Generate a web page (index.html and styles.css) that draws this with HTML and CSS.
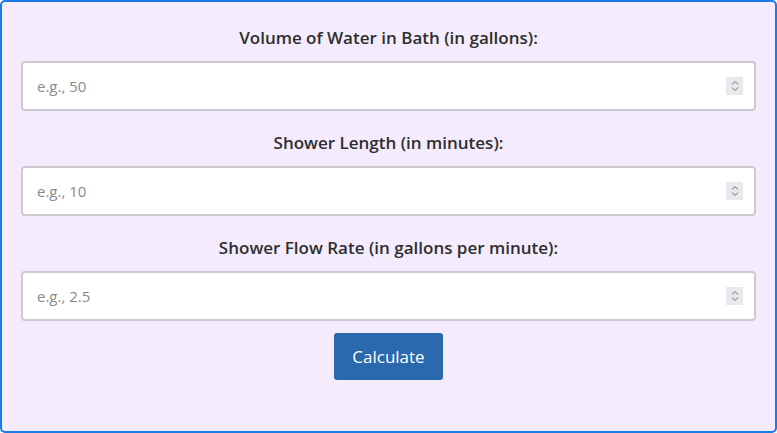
FILE: index.html
```html
<!DOCTYPE html>
<html lang="en">
<head>
    <meta charset="UTF-8">
    <meta name="viewport" content="width=device-width, initial-scale=1.0">
    <title>Bath vs Shower Calculator</title>
    <link rel="stylesheet" href="styles.css">
</head>
<body>
    <div class="calculator">
        <div class="form-group">
            <label for="bathVolume">Volume of Water in Bath (in gallons):</label>
            <div class="input-wrap">
                <input type="number" id="bathVolume" placeholder="e.g., 50">
                <span class="spinner">
                    <svg width="10" height="14" viewBox="0 0 10 14"><path d="M2 5.5 L5 2.5 L8 5.5 M2 8.5 L5 11.5 L8 8.5" fill="none" stroke="#6b6b73" stroke-width="1"/></svg>
                </span>
            </div>
        </div>
        <div class="form-group">
            <label for="showerLength">Shower Length (in minutes):</label>
            <div class="input-wrap">
                <input type="number" id="showerLength" placeholder="e.g., 10">
                <span class="spinner">
                    <svg width="10" height="14" viewBox="0 0 10 14"><path d="M2 5.5 L5 2.5 L8 5.5 M2 8.5 L5 11.5 L8 8.5" fill="none" stroke="#6b6b73" stroke-width="1"/></svg>
                </span>
            </div>
        </div>
        <div class="form-group">
            <label for="flowRate">Shower Flow Rate (in gallons per minute):</label>
            <div class="input-wrap">
                <input type="number" id="flowRate" placeholder="e.g., 2.5">
                <span class="spinner">
                    <svg width="10" height="14" viewBox="0 0 10 14"><path d="M2 5.5 L5 2.5 L8 5.5 M2 8.5 L5 11.5 L8 8.5" fill="none" stroke="#6b6b73" stroke-width="1"/></svg>
                </span>
            </div>
        </div>
        <div class="actions">
            <button type="button">Calculate</button>
        </div>
    </div>
</body>
</html>
```

FILE: styles.css
```css
* {
    box-sizing: border-box;
}

body {
    margin: 0;
    font-family: "Open Sans", "Noto Sans", sans-serif;
    color: #333;
}

.calculator {
    width: 777px;
    height: 433px;
    background: #f4ecfc;
    border: 2px solid #1a7ae8;
    border-radius: 5px;
    padding: 24px 19px 0;
}

.form-group {
    margin-bottom: 20px;
}

.form-group label {
    display: block;
    text-align: center;
    font-size: 17px;
    font-weight: 600;
    line-height: 24px;
    margin-bottom: 11px;
    color: #2e2e2e;
}

.input-wrap {
    position: relative;
}

.input-wrap input {
    display: block;
    width: 100%;
    height: 50px;
    padding: 0 14px;
    border: 2px solid #cdcad0;
    border-radius: 4px;
    background: #fff;
    font-family: inherit;
    font-size: 15px;
    color: #333;
    -moz-appearance: textfield;
}

.input-wrap input::placeholder {
    color: #8a8a8a;
}

.input-wrap input::-webkit-inner-spin-button,
.input-wrap input::-webkit-outer-spin-button {
    -webkit-appearance: none;
    margin: 0;
}

.spinner {
    position: absolute;
    right: 13px;
    top: 16px;
    width: 17px;
    height: 18px;
    background: #e9e9ed;
    display: flex;
    align-items: center;
    justify-content: center;
}

.actions {
    display: flex;
    justify-content: center;
    margin-top: -8px;
}

.actions button {
    height: 47px;
    width: 109px;
    background: #2b69ae;
    color: #fff;
    border: none;
    border-radius: 3px;
    font-family: inherit;
    font-size: 17px;
    cursor: pointer;
}
```
